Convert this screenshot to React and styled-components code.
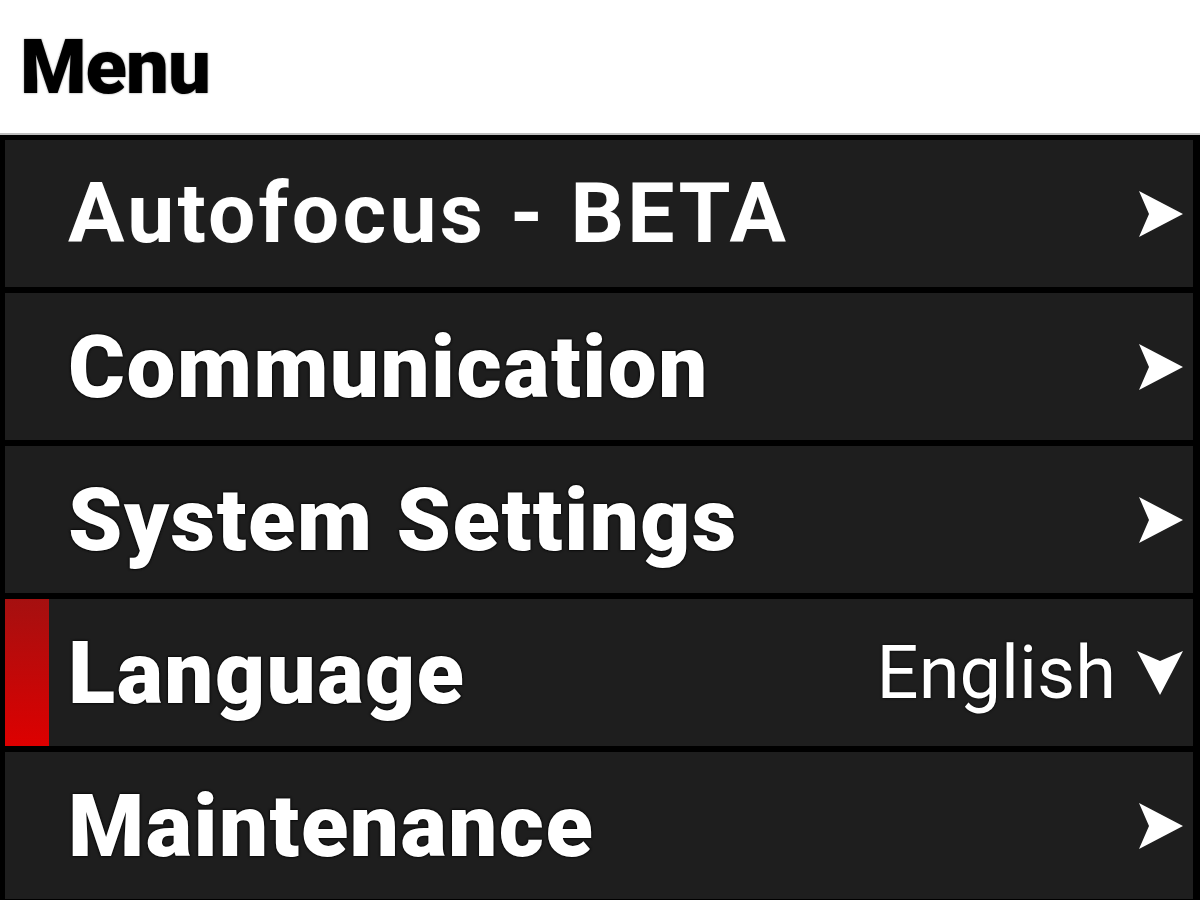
import React from "react";
import styled, { createGlobalStyle } from "styled-components";

const Global = createGlobalStyle`
  html, body {
    margin: 0;
    padding: 0;
    background: #ffffff;
  }
  body {
    font-family: Roboto, "Liberation Sans", sans-serif;
  }
`;

const items = [
  { label: "Autofocus - BETA", beta: true },
  { label: "Communication" },
  { label: "System Settings" },
  { label: "Language", value: "English", active: true },
  { label: "Maintenance" },
];

const RightArrow = () => (
  <svg width="46" height="48" viewBox="0 0 46 48">
    <path d="M1 1 L45 24 L1 47 L11 24 Z" fill="#fff" />
  </svg>
);

const DownArrow = () => (
  <svg width="48" height="46" viewBox="0 0 48 46">
    <path d="M1 1 L24 11 L47 1 L24 45 Z" fill="#fff" />
  </svg>
);

const App = () => {
  return (
    <Page>
      <Global />
      <Header>
        <Title>Menu</Title>
      </Header>
      <Panel>
        {items.map((item) => (
          <Row key={item.label}>
            <Marker $active={item.active} />
            <Label $beta={item.beta}>{item.label}</Label>
            <Right>
              {item.value && <Value>{item.value}</Value>}
              {item.value ? <DownArrow /> : <RightArrow />}
            </Right>
          </Row>
        ))}
      </Panel>
    </Page>
  );
};

const Page = styled.div`
  width: 1200px;
  height: 900px;
  overflow: hidden;
  display: flex;
  flex-direction: column;
`;

const Header = styled.div`
  height: 133px;
  flex-shrink: 0;
  display: flex;
  align-items: center;
  padding-left: 20px;
  box-sizing: border-box;
  background: #fff;
`;

const Title = styled.h1`
  margin: 0;
  font-family: Roboto, sans-serif;
  font-weight: 900;
  font-size: 76px;
  letter-spacing: -1px;
  color: #000;
  text-shadow: 0 0 2px rgba(0, 0, 0, 0.5);
`;

const Panel = styled.div`
  flex: 1;
  min-height: 0;
  overflow: hidden;
  background: #000;
  border-top: 2px solid #bdbdbd;
  padding: 5px 7px 5px 5px;
  display: flex;
  flex-direction: column;
  gap: 6px;
`;

const Row = styled.div`
  height: 147px;
  flex-shrink: 0;
  background: #1e1e1e;
  display: flex;
  align-items: center;
  padding-right: 9px;
`;

const Marker = styled.div`
  width: 44px;
  align-self: stretch;
  margin-right: 19px;
  background: ${(p) =>
    p.$active ? "linear-gradient(#a51010, #dd0000)" : "transparent"};
`;

const Label = styled.div`
  flex: 1;
  color: #fff;
  font-family: Roboto, sans-serif;
  font-weight: ${(p) => (p.$beta ? 700 : 900)};
  font-size: ${(p) => (p.$beta ? "84px" : "87px")};
  letter-spacing: ${(p) => (p.$beta ? "3.2px" : "1.5px")};
  text-shadow: ${(p) => (p.$beta ? "none" : "0 0 3px #000, 0 0 2px #000")};
  white-space: nowrap;
`;

const Right = styled.div`
  display: flex;
  align-items: center;
  gap: 20px;
`;

const Value = styled.span`
  color: #fff;
  font-family: Roboto, sans-serif;
  font-weight: 400;
  font-size: 74px;
  text-shadow: 0 0 3px #000;
`;

export default App;
